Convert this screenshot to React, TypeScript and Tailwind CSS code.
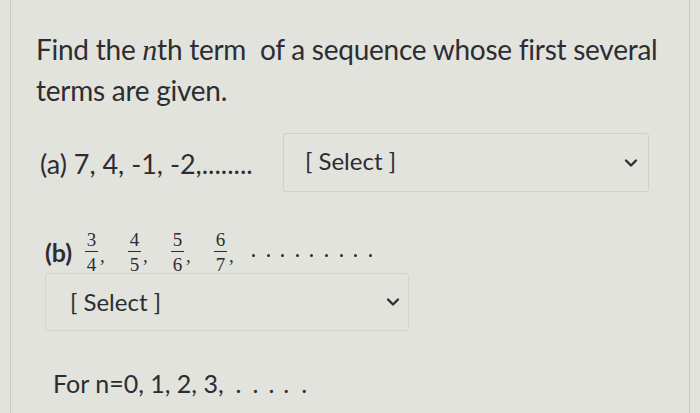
const Chevron = () => (
  <svg width="14" height="10" viewBox="0 0 14 10" fill="none" className="shrink-0">
    <path d="M2 2.5 L7 7.5 L12 2.5" stroke="#2f3036" strokeWidth="2.4" strokeLinecap="round" strokeLinejoin="round" />
  </svg>
);

const serif = { fontFamily: '"Liberation Serif", "DejaVu Serif", serif' };

const Frac = ({ n, d, w }: { n: string; d: string; w: string }) => (
  <span className={`${w} flex items-center`} style={serif}>
    <span className="flex flex-col items-center leading-none">
      <span className="text-[19px] pb-[2px]">{n}</span>
      <span className="w-[13px] border-t-[1.5px] border-[#2b2c30]" />
      <span className="text-[19px] pt-[3px]">{d}</span>
    </span>
    <span className="text-[19px] leading-none mt-[6px] ml-[2px]">,</span>
  </span>
);

export default function App() {
  return (
    <div
      className="w-[700px] h-[413px] bg-[#e2e3dd] overflow-hidden text-[#2c2d33]"
      style={{ fontFamily: 'Lato, "Liberation Sans", sans-serif' }}
    >
      <div className="mx-[10px] h-full border-l border-r border-[#c9cac4] pl-[25px] pt-[29px]">
        <p className="text-[28px] leading-[41px] tracking-[-0.25px]">
          Find the <span className="italic text-[30px]" style={serif}>n</span>th term&nbsp; of a sequence whose first several
          <br />
          terms are given.
        </p>

        {/* part a */}
        <div className="flex items-center mt-[22px]">
          <span className="text-[27px] ml-[4px] w-[243px] mt-[4px]">(a) 7, 4, -1, -2,........</span>
          <div className="w-[366px] h-[59px] border border-[#cfd0ca] rounded-[3px] flex items-center justify-between pl-[21px] pr-[10px]">
            <span className="text-[24px] -mt-[3px]">[ Select ]</span>
            <Chevron />
          </div>
        </div>

        {/* part b */}
        <div className="flex items-center mt-[40px] h-[40px]">
          <span className="text-[25px] font-bold ml-[9px] w-[40px] leading-none">(b)</span>
          <Frac n="3" d="4" w="w-[43px]" />
          <Frac n="4" d="5" w="w-[43px]" />
          <Frac n="5" d="6" w="w-[43px]" />
          <Frac n="6" d="7" w="w-[38px]" />
          <div className="flex items-center gap-[11.6px] mt-[6px]">
            {[0, 1, 2, 3, 4, 5, 6, 7, 8].map((i) => (
              <span key={i} className="w-[3px] h-[3px] rounded-full bg-[#2c2d33]" />
            ))}
          </div>
        </div>

        <div className="ml-[9px] mt-[1px] w-[364px] h-[58px] border border-[#d3d4ce] rounded-[3px] flex items-center justify-between pl-[24px] pr-[8px]">
          <span className="text-[24px]">[ Select ]</span>
          <Chevron />
        </div>

        <p className="ml-[17px] mt-[40px] text-[25px] leading-none flex items-baseline">
          <span>For n=0, 1, 2, 3,</span>
          <span className="ml-[12px]">.</span>
          <span className="ml-[11px]">.</span>
          <span className="ml-[10px]">.</span>
          <span className="ml-[9px]">.</span>
          <span className="ml-[12px]">.</span>
        </p>
      </div>
    </div>
  );
}
